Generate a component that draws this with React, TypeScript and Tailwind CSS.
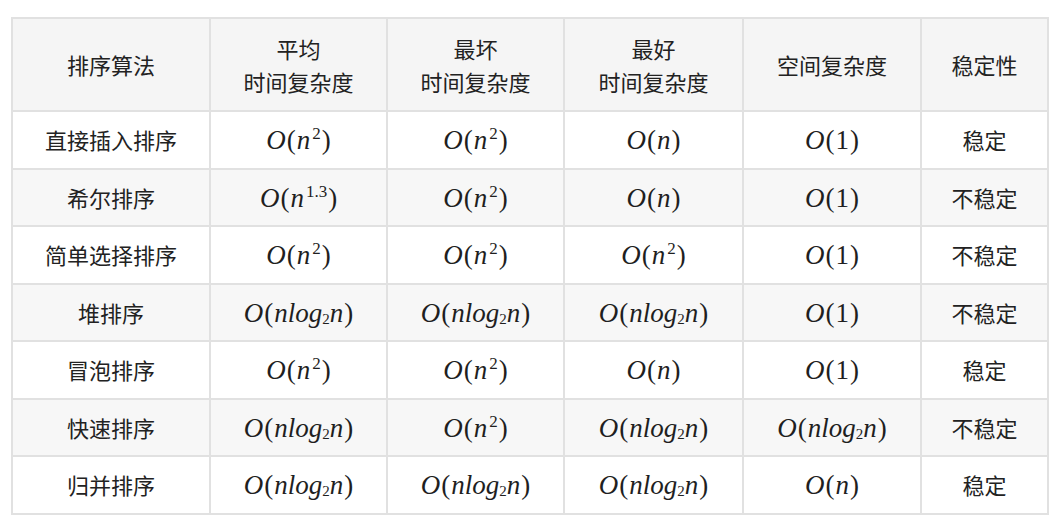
import React from 'react'

type Cell = string

const header: { top?: string; bottom: string }[] = [
  { bottom: '排序算法' },
  { top: '平均', bottom: '时间复杂度' },
  { top: '最坏', bottom: '时间复杂度' },
  { top: '最好', bottom: '时间复杂度' },
  { bottom: '空间复杂度' },
  { bottom: '稳定性' },
]

const rows: Cell[][] = [
  ['直接插入排序', 'n2', 'n2', 'n', '1', '稳定'],
  ['希尔排序', 'n1.3', 'n2', 'n', '1', '不稳定'],
  ['简单选择排序', 'n2', 'n2', 'n2', '1', '不稳定'],
  ['堆排序', 'nlog', 'nlog', 'nlog', '1', '不稳定'],
  ['冒泡排序', 'n2', 'n2', 'n', '1', '稳定'],
  ['快速排序', 'nlog', 'n2', 'nlog', 'nlog', '不稳定'],
  ['归并排序', 'nlog', 'nlog', 'nlog', 'n', '稳定'],
]

const widths = ['w-[198px]', 'w-[177px]', 'w-[177px]', 'w-[179px]', 'w-[178px]', 'w-[127px]']

function BigO({ kind }: { kind: string }) {
  let inner: React.ReactNode
  if (kind === 'n2') {
    inner = (
      <>
        <i>n</i>
        <sup className="text-[17px] ml-[2px] top-[-10px]">2</sup>
      </>
    )
  } else if (kind === 'n1.3') {
    inner = (
      <>
        <i>n</i>
        <sup className="text-[17px] ml-[2px] top-[-10px]">1.3</sup>
      </>
    )
  } else if (kind === 'nlog') {
    inner = (
      <>
        <i>nlog</i>
        <sub className="text-[15px] bottom-[-2px]">2</sub>
        <i>n</i>
      </>
    )
  } else if (kind === 'n') {
    inner = <i>n</i>
  } else {
    inner = <span>1</span>
  }
  return (
    <span className="font-['Liberation_Serif',serif] text-[27px] text-[#1f1f1f] leading-none">
      <i>O</i>
      <span className="mx-[1px]">(</span>
      {inner}
      <span className="ml-[1px]">)</span>
    </span>
  )
}

export default function App() {
  return (
    <div className="w-[1063px] h-[524px] bg-white pt-[17px] pl-[11px] font-['Noto_Sans_CJK_SC','Noto_Sans',sans-serif] text-[#222]">
      <table className="table-fixed border-collapse w-[1037px]">
        <thead>
          <tr className="bg-[#f5f5f5] h-[93px]">
            {header.map((h, i) => (
              <th
                key={i}
                className={`${widths[i]} border-2 border-[#e1e1e1] font-normal text-[22px] leading-[33px] text-center align-middle`}
              >
                {h.top && <div>{h.top}</div>}
                <div>{h.bottom}</div>
              </th>
            ))}
          </tr>
        </thead>
        <tbody>
          {rows.map((r, ri) => (
            <tr key={ri} className={`h-[57.5px] ${ri % 2 === 1 ? 'bg-[#f7f7f7]' : 'bg-white'}`}>
              {r.map((c, ci) => (
                <td
                  key={ci}
                  className="border-2 border-[#e1e1e1] text-center align-middle text-[22px]"
                >
                  {ci === 0 || ci === 5 ? c : <BigO kind={c} />}
                </td>
              ))}
            </tr>
          ))}
        </tbody>
      </table>
    </div>
  )
}
